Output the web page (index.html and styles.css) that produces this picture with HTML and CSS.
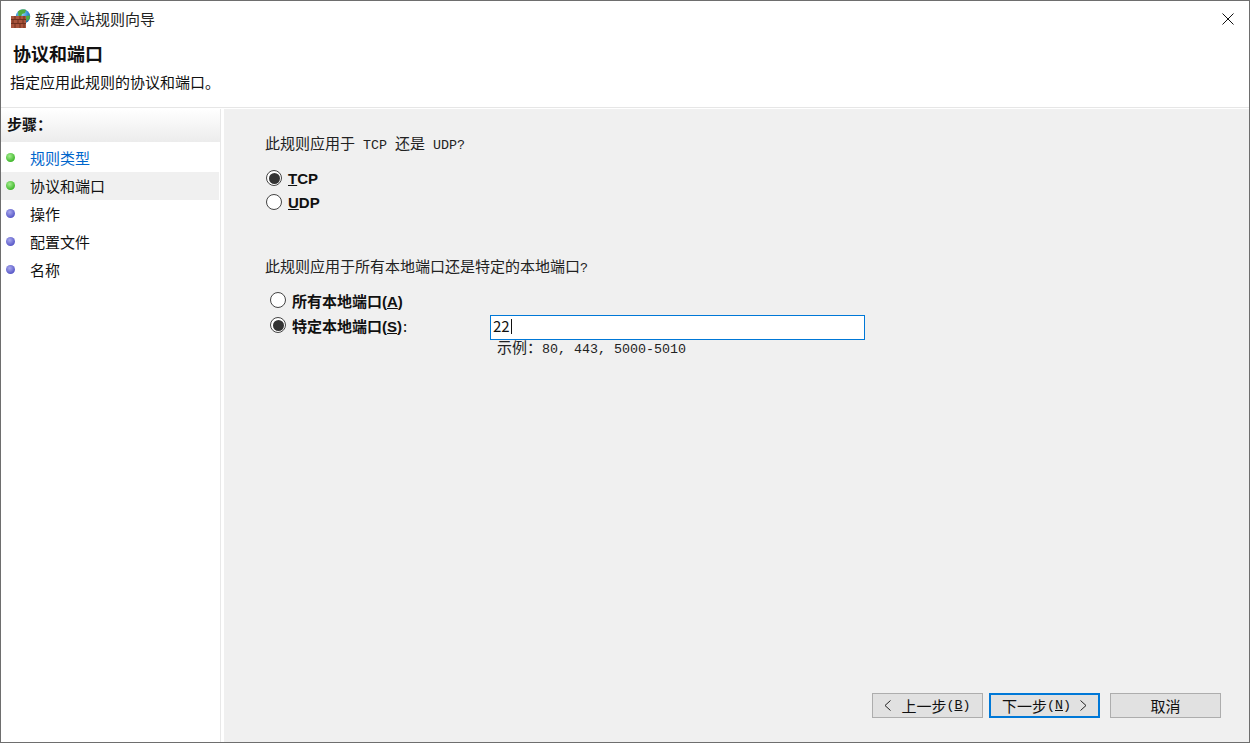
FILE: index.html
```html
<!DOCTYPE html>
<html lang="zh-CN">
<head>
<meta charset="utf-8">
<title>新建入站规则向导</title>
<link rel="stylesheet" href="styles.css">
</head>
<body>
<div class="window">
  <div class="titlebar">
    <svg class="app-icon" width="20" height="19" viewBox="0 0 20 19">
      <defs>
        <radialGradient id="globe" cx="0.4" cy="0.3" r="0.75"><stop offset="0" stop-color="#9ad8f4"/><stop offset="0.6" stop-color="#2f8ad0"/><stop offset="1" stop-color="#1c5fa0"/></radialGradient>
      </defs>
      <circle cx="12" cy="7.500" r="7.200" fill="url(#globe)"/>
      <path d="M7 2.500C9 .5 13 0 15 1l-1 3-3 1-1 3-2.500-1z" fill="#4fae3e"/>
      <path d="M15 7l4-.5-.5 3.500-3 2z" fill="#4fae3e"/>
      <rect x="0" y="7" width="15" height="12" fill="#a9543c"/>
      <path d="M0 10.500h15M0 14.500h15M4 7v3.500M9 7v3.500M13 7v3.500M2 10.500v4M7 10.500v4M12 10.500v4M4 14.500V19M9 14.500V19M13 14.500V19" stroke="#70301f" stroke-width="1" fill="none"/>
    </svg>
    <span class="title-text">新建入站规则向导</span>
    <svg class="close-icon" width="12" height="12" viewBox="0 0 12 12"><path d="M.5.500l11 11M11.500.500l-11 11" stroke="#111" stroke-width="1" fill="none"/></svg>
  </div>
  <header class="page-head">
    <h1 class="page-title">协议和端口</h1>
    <p class="page-desc">指定应用此规则的协议和端口。</p>
  </header>
  <div class="body">
    <nav class="steps">
      <div class="steps-head">步骤：</div>
      <ul class="step-list">
        <li class="step done link"><i class="dot"></i>规则类型</li>
        <li class="step done current"><i class="dot"></i>协议和端口</li>
        <li class="step"><i class="dot"></i>操作</li>
        <li class="step"><i class="dot"></i>配置文件</li>
        <li class="step"><i class="dot"></i>名称</li>
      </ul>
    </nav>
    <main class="content">
      <div class="form">
        <p class="question">此规则应用于<span class="mono"> TCP </span>还是<span class="mono"> UDP?</span></p>
        <div class="radio-group">
          <label class="radio"><i class="radio-mark on"></i><b class="latin-bold"><u>T</u>CP</b></label>
          <label class="radio"><i class="radio-mark"></i><b class="latin-bold"><u>U</u>DP</b></label>
        </div>
        <p class="question second">此规则应用于所有本地端口还是特定的本地端口<span class="mono">?</span></p>
        <div class="port-group">
          <label class="radio port-row"><i class="radio-mark"></i><b>所有本地端口<span class="latin-bold">(<u>A</u>)</span></b></label>
          <div class="port-specific">
            <label class="radio port-row port-label"><i class="radio-mark on"></i><b>特定本地端口<span class="latin-bold">(<u>S</u>)</span></b><span class="colon">:</span></label>
            <div class="port-field">
              <div class="input"><span>22</span><i class="caret"></i></div>
              <div class="hint">示例：<span class="mono">80, 443, 5000-5010</span></div>
            </div>
          </div>
        </div>
      </div>
      <div class="actions">
        <button class="btn back"><svg class="chev" width="7" height="11" viewBox="0 0 7 11"><path d="M6.500.500l-5.500 5 5.500 5" stroke="#222" fill="none"/></svg>上一步<span class="mono">(<u>B</u>)</span></button>
        <button class="btn primary">下一步<span class="mono">(<u>N</u>)</span><svg class="chev next" width="7" height="11" viewBox="0 0 7 11"><path d="M.5.500l5.500 5-5.500 5" stroke="#222" fill="none"/></svg></button>
        <button class="btn cancel">取消</button>
      </div>
    </main>
  </div>
</div>
</body>
</html>
```
FILE: styles.css
```css
* { box-sizing: border-box; }
html, body { margin: 0; height: 100%; }
body { font-family: "Noto Sans CJK SC", "Liberation Sans", sans-serif; font-size: 15px; color: #111; background: #fff; overflow: hidden; }
p, h1, ul { margin: 0; padding: 0; }
i { display: block; font-style: normal; }
.window { width: 1250px; height: 743px; border: 1px solid #6e6e6e; display: flex; flex-direction: column; background: #fff; }
.titlebar { height: 30px; flex: none; display: flex; align-items: center; padding: 5px 15px 0 10px; }
.app-icon { flex: none; }
.title-text { margin-left: 4px; line-height: 20px; color: #222; }
.close-icon { margin-left: auto; }
.page-head { height: 77px; flex: none; padding-top: 11px; border-bottom: 1px solid #e6e6e6; }
.page-title { font-size: 18px; font-weight: 700; line-height: 22px; margin-left: 12px; }
.page-desc { margin: 8px 0 0 9px; line-height: 20px; }
.body { flex: 1; display: flex; min-height: 0; padding-top: 1px; }
.steps { width: 220px; flex: none; border-right: 1px solid #e8e8e8; }
.steps-head { height: 33px; font-weight: 700; line-height: 30px; padding-left: 6px; background: linear-gradient(#fff, #ececec); }
.step-list { list-style: none; margin-top: 2px; }
.step { height: 28px; display: flex; align-items: center; padding-left: 5px; margin-right: 1px; line-height: 28px; }
.step.current { background: #f0f0f0; }
.step.link { color: #0066cc; }
.dot { width: 9px; height: 9px; border-radius: 50%; margin-right: 15px; flex: none; margin-top: -1px; background: radial-gradient(circle at 40% 35%, #a9a9ee, #5a5ac8 70%); }
.done .dot { background: radial-gradient(circle at 40% 35%, #a5ee90, #42b82e 70%); }
.content { flex: 1; margin-left: 3px; background: #f0f0f0; display: flex; flex-direction: column; justify-content: space-between; padding: 23px 28px 24px 41px; min-width: 0; }
.mono { font-family: "Liberation Mono", monospace; font-size: 13.33px; white-space: pre; }
.question { line-height: 22px; color: #222; }
.radio-group { display: flex; flex-direction: column; gap: 4px; margin: 11px 0 0 1px; }
.radio { display: flex; align-items: center; height: 20px; }
.radio-mark { width: 16px; height: 16px; border: 1px solid #444; border-radius: 50%; background: #fff; flex: none; margin-right: 6px; position: relative; }
.radio-mark.on::after { content: ""; position: absolute; inset: 1.5px; border-radius: 50%; background: #333; }
.latin-bold { font-family: "Liberation Sans", sans-serif; font-weight: 700; font-size: 15px; }
.second { margin-top: 43px; }
.port-group { margin: 10px 0 0 5px; display: flex; flex-direction: column; gap: 5px; }
.port-specific { display: flex; align-items: flex-start; }
.port-label { width: 220px; }
.colon { margin-left: 1px; }
.port-field { width: 375px; }
.input { height: 25px; border: 1px solid #0078d7; background: #fff; display: flex; align-items: center; padding: 0 0 3px 2px; font-size: 15px; line-height: 20px; }
.caret { width: 1px; height: 15px; background: #111; margin-left: 1px; }
.hint { margin: 0 0 0 7px; line-height: 13px; color: #222; }
.actions { display: flex; justify-content: flex-end; gap: 10px; }
.btn { width: 111px; height: 25px; padding: 0; border: 1px solid #adadad; background: #e1e1e1; font: inherit; color: #111; display: flex; align-items: center; justify-content: center; line-height: 20px; }
.back { margin-right: -4px; }
.primary { border: 2px solid #0078d7; }
.chev { flex: none; margin-right: 10px; }
.chev.next { margin: 0 0 0 9px; }
```
